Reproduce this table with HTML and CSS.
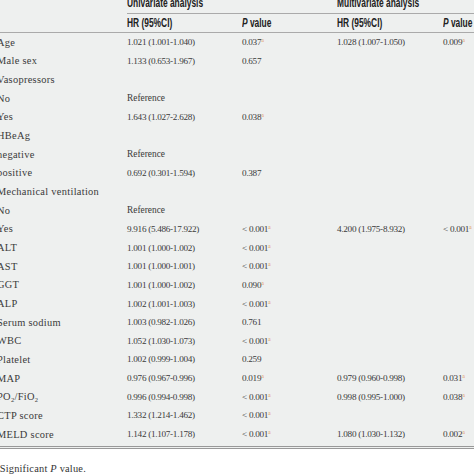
FILE: index.html
```html
<!DOCTYPE html>
<html>
<head>
<meta charset="utf-8">
<link rel="stylesheet" href="styles.css">
</head>
<body>
<div class="page">
<table class="res">
<colgroup><col class="c1"><col class="c2"><col class="c3"><col class="c4"><col class="c5"></colgroup>
<thead>
<tr class="h1"><th></th><th colspan="2" class="grp"><span class="hd">Univariate analysis</span></th><th colspan="2" class="grp"><span class="hd">Multivariate analysis</span></th></tr>
<tr class="h2"><th></th><th><span class="hd">HR (95%CI)</span></th><th><span class="hd"><i>P</i> value</span></th><th><span class="hd">HR (95%CI)</span></th><th><span class="hd"><i>P</i> value</span></th></tr>
</thead>
<tbody>
<tr><td>Age</td><td>1.021 (1.001-1.040)</td><td>0.037<sup>a</sup></td><td>1.028 (1.007-1.050)</td><td>0.009<sup>a</sup></td></tr>
<tr><td>Male sex</td><td>1.133 (0.653-1.967)</td><td>0.657</td><td></td><td></td></tr>
<tr><td>Vasopressors</td><td></td><td></td><td></td><td></td></tr>
<tr><td>No</td><td class="ref">Reference</td><td></td><td></td><td></td></tr>
<tr><td>Yes</td><td>1.643 (1.027-2.628)</td><td>0.038<sup>a</sup></td><td></td><td></td></tr>
<tr><td>HBeAg</td><td></td><td></td><td></td><td></td></tr>
<tr><td>negative</td><td class="ref">Reference</td><td></td><td></td><td></td></tr>
<tr><td>positive</td><td>0.692 (0.301-1.594)</td><td>0.387</td><td></td><td></td></tr>
<tr><td>Mechanical ventilation</td><td></td><td></td><td></td><td></td></tr>
<tr><td>No</td><td class="ref">Reference</td><td></td><td></td><td></td></tr>
<tr><td>Yes</td><td>9.916 (5.486-17.922)</td><td>&lt; 0.001<sup>a</sup></td><td>4.200 (1.975-8.932)</td><td>&lt; 0.001<sup>a</sup></td></tr>
<tr><td>ALT</td><td>1.001 (1.000-1.002)</td><td>&lt; 0.001<sup>a</sup></td><td></td><td></td></tr>
<tr><td>AST</td><td>1.001 (1.000-1.001)</td><td>&lt; 0.001<sup>a</sup></td><td></td><td></td></tr>
<tr><td>GGT</td><td>1.001 (1.000-1.002)</td><td>0.090<sup>a</sup></td><td></td><td></td></tr>
<tr><td>ALP</td><td>1.002 (1.001-1.003)</td><td>&lt; 0.001<sup>a</sup></td><td></td><td></td></tr>
<tr><td>Serum sodium</td><td>1.003 (0.982-1.026)</td><td>0.761</td><td></td><td></td></tr>
<tr><td>WBC</td><td>1.052 (1.030-1.073)</td><td>&lt; 0.001<sup>a</sup></td><td></td><td></td></tr>
<tr><td>Platelet</td><td>1.002 (0.999-1.004)</td><td>0.259</td><td></td><td></td></tr>
<tr><td>MAP</td><td>0.976 (0.967-0.996)</td><td>0.019<sup>a</sup></td><td>0.979 (0.960-0.998)</td><td>0.031<sup>a</sup></td></tr>
<tr><td>PO<sub>2</sub>/FiO<sub>2</sub></td><td>0.996 (0.994-0.998)</td><td>&lt; 0.001<sup>a</sup></td><td>0.998 (0.995-1.000)</td><td>0.038<sup>a</sup></td></tr>
<tr><td>CTP score</td><td>1.332 (1.214-1.462)</td><td>&lt; 0.001<sup>a</sup></td><td></td><td></td></tr>
<tr class="last"><td>MELD score</td><td>1.142 (1.107-1.178)</td><td>&lt; 0.001<sup>a</sup></td><td>1.080 (1.030-1.132)</td><td>0.002<sup>a</sup></td></tr>
</tbody>
</table>
<p class="note"><sup>a</sup>Significant <i>P</i> value.</p>
</div>
</body>
</html>
```
FILE: styles.css
```css
html, body { margin: 0; padding: 0; background: #fff; overflow: hidden; }
.page { width: 474px; height: 474px; overflow: hidden; }
.res {
  border-collapse: collapse;
  table-layout: fixed;
  width: 560px;
  margin-left: -3px;
  margin-top: -4px;
  background: #eef0ef;
  color: #3a3a3a;
  font-family: "Liberation Serif", serif;
}
.c1 { width: 130px; }
.c2 { width: 115px; }
.c3 { width: 95px; }
.c4 { width: 106px; }
.c5 { width: 114px; }
th, td { padding: 0; text-align: left; white-space: nowrap; vertical-align: middle; }
th {
  font-family: "Liberation Sans", sans-serif;
  font-weight: bold;
  font-size: 12px;
  color: #222;
}
.hd { display: inline-block; transform: scaleX(0.7); transform-origin: left center; }
.h1 th { height: 17px; vertical-align: top; line-height: 14px; }
.h1 .grp { border-bottom: 1px solid #aaa; }
.h2 th { height: 18px; border-bottom: 1px solid #aaa; }
td { height: 18.67px; font-size: 9.2px; letter-spacing: -0.3px; }
td:first-child { font-size: 10.4px; letter-spacing: 0.3px; }
td.ref { font-size: 9.4px; letter-spacing: 0; }
.last td { padding-bottom: 3px; border-bottom: 3px double #999; }
sup { font-size: 6px; color: #e39a6b; vertical-align: 3px; letter-spacing: 0; }
sub { font-size: 6.5px; vertical-align: -2px; }
.note {
  margin: 14px 0 0 -3px;
  font-family: "Liberation Serif", serif;
  font-size: 10.4px;
  letter-spacing: 0.2px;
  color: #333;
}
.note sup { color: #333; }
```
